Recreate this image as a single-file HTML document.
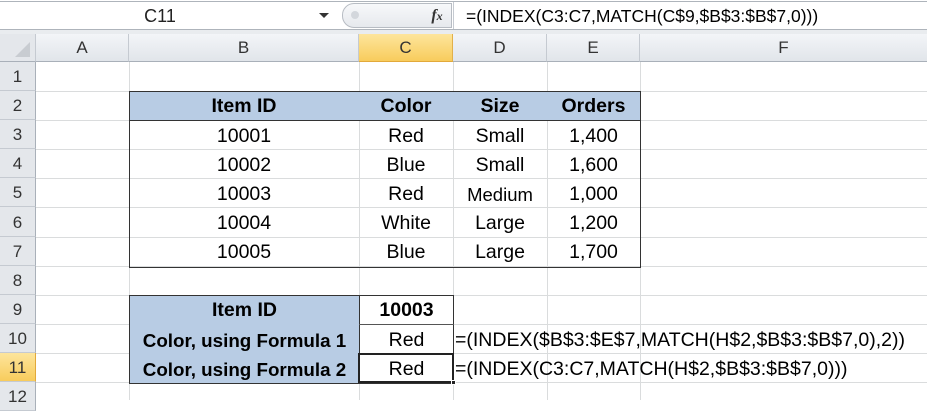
<!DOCTYPE html>
<html><head><meta charset="utf-8"><style>
*{margin:0;padding:0;box-sizing:border-box}
body{width:927px;height:400px;overflow:hidden;background:#fff;font-family:"Liberation Sans",sans-serif;position:relative}
.a{position:absolute}
.t{position:absolute;display:flex;align-items:center;justify-content:center;white-space:nowrap;color:#000;padding-top:2px}
.hl{position:absolute;left:36px;width:891px;height:1px;background:#dadcdd}
.vl{position:absolute;top:62px;height:338px;width:1px;background:#dadcdd}
.ch{position:absolute;top:34px;height:28px;background:linear-gradient(#f3f5f8,#e1e5ea);border-right:1px solid #c5cad1;border-bottom:1px solid #a9b0b9;display:flex;align-items:center;justify-content:center;font-size:17px;color:#333}
.rh{position:absolute;left:0;width:36px;background:#e4e7eb;border-bottom:1px solid #c5cad1;border-right:1px solid #a9b0b9;display:flex;align-items:center;justify-content:center;font-size:17px;color:#333;padding-top:2px}
.c{font-size:19.5px}
</style></head><body>
<div class="a" style="left:0;top:0;width:927px;height:33px;background:#fff"></div>
<div class="a" style="left:0;top:1px;width:927px;height:1px;background:#aeb4bb"></div>
<div class="a" style="left:0;top:29px;width:927px;height:1px;background:#aeb4bb"></div>
<div class="a" style="left:0;top:30px;width:927px;height:4px;background:#e9ecef"></div>
<div class="t" style="left:135px;top:3px;width:50px;height:24px;font-size:18px;color:#222">C11</div>
<div class="a" style="left:319px;top:13px;width:0;height:0;border-left:5px solid transparent;border-right:5px solid transparent;border-top:5px solid #333"></div>
<div class="a" style="left:342px;top:3px;width:110px;height:25px;border:1px solid #b7bcc3;border-radius:12px 0 0 12px;background:linear-gradient(#f7f8fa,#e6e9ed)"></div>
<div class="a" style="left:351px;top:11px;width:8px;height:8px;border-radius:50%;background:#d3d7dc"></div>
<div class="t" style="left:426px;top:4px;width:22px;height:22px;font-family:'Liberation Serif',serif;font-style:italic;font-weight:bold;font-size:16px;color:#333">f<span style="font-size:12px">x</span></div>
<div class="a" style="left:453px;top:2px;width:1px;height:27px;background:#c5cad1"></div>
<div class="t" style="left:466px;top:3px;height:24px;font-size:17.5px;justify-content:flex-start">=(INDEX(C3:C7,MATCH(C$9,$B$3:$B$7,0)))</div>

<div class="ch" style="left:0;width:36px;background:#e4e7eb"><div style="position:absolute;right:5px;bottom:4px;width:0;height:0;border-left:15px solid transparent;border-bottom:15px solid #c8ccd1"></div></div>
<div class="ch" style="left:36px;width:93px">A</div>
<div class="ch" style="left:129px;width:230px">B</div>
<div class="ch" style="left:359px;width:94px;background:linear-gradient(#fde59c,#f8cc5c);border-color:#e2b04a;border-bottom:1px solid #e2a93a">C</div>
<div class="ch" style="left:453px;width:94px">D</div>
<div class="ch" style="left:547px;width:93px">E</div>
<div class="ch" style="left:640px;width:287px;border-right:none">F</div>

<div class="hl" style="top:91px"></div><div class="hl" style="top:120px"></div><div class="hl" style="top:149px"></div>
<div class="hl" style="top:178px"></div><div class="hl" style="top:207px"></div><div class="hl" style="top:237px"></div>
<div class="hl" style="top:266px"></div><div class="hl" style="top:295px"></div><div class="hl" style="top:324px"></div>
<div class="hl" style="top:353px"></div><div class="hl" style="top:382px"></div>
<div class="vl" style="left:129px"></div><div class="vl" style="left:359px"></div><div class="vl" style="left:453px"></div>
<div class="vl" style="left:547px"></div><div class="vl" style="left:640px"></div>

<div class="rh" style="top:62px;height:29px">1</div>
<div class="rh" style="top:91px;height:29px">2</div>
<div class="rh" style="top:120px;height:29px">3</div>
<div class="rh" style="top:149px;height:29px">4</div>
<div class="rh" style="top:178px;height:29px">5</div>
<div class="rh" style="top:207px;height:30px">6</div>
<div class="rh" style="top:237px;height:29px">7</div>
<div class="rh" style="top:266px;height:29px">8</div>
<div class="rh" style="top:295px;height:29px">9</div>
<div class="rh" style="top:324px;height:29px">10</div>
<div class="rh" style="top:353px;height:29px;background:linear-gradient(#fde59c,#f8cc5c);border-right-color:#e2a93a">11</div>
<div class="rh" style="top:382px;height:29px">12</div>

<div class="a" style="left:129px;top:91px;width:512px;height:29px;background:#b8cce4"></div>
<div class="a" style="left:129px;top:120px;width:512px;height:1px;background:#333"></div>
<div class="a" style="left:129px;top:91px;width:512px;height:177px;border:1.5px solid #333"></div>
<div class="t c" style="left:129px;top:91px;width:230px;height:29px;font-weight:bold">Item ID</div>
<div class="t c" style="left:359px;top:91px;width:94px;height:29px;font-weight:bold">Color</div>
<div class="t c" style="left:453px;top:91px;width:94px;height:29px;font-weight:bold">Size</div>
<div class="t c" style="left:547px;top:91px;width:93px;height:29px;font-weight:bold">Orders</div>

<div class="t c" style="left:129px;top:121px;width:230px;height:29px">10001</div>
<div class="t c" style="left:359px;top:121px;width:94px;height:29px">Red</div>
<div class="t c" style="left:453px;top:121px;width:94px;height:29px">Small</div>
<div class="t c" style="left:547px;top:121px;width:93px;height:29px">1,400</div>

<div class="t c" style="left:129px;top:150px;width:230px;height:29px">10002</div>
<div class="t c" style="left:359px;top:150px;width:94px;height:29px">Blue</div>
<div class="t c" style="left:453px;top:150px;width:94px;height:29px">Small</div>
<div class="t c" style="left:547px;top:150px;width:93px;height:29px">1,600</div>

<div class="t c" style="left:129px;top:179px;width:230px;height:29px">10003</div>
<div class="t c" style="left:359px;top:179px;width:94px;height:29px">Red</div>
<div class="t" style="left:453px;top:179px;width:94px;height:29px;font-size:18.5px">Medium</div>
<div class="t c" style="left:547px;top:179px;width:93px;height:29px">1,000</div>

<div class="t c" style="left:129px;top:208px;width:230px;height:29px">10004</div>
<div class="t c" style="left:359px;top:208px;width:94px;height:29px">White</div>
<div class="t c" style="left:453px;top:208px;width:94px;height:29px">Large</div>
<div class="t c" style="left:547px;top:208px;width:93px;height:29px">1,200</div>

<div class="t c" style="left:129px;top:237px;width:230px;height:29px">10005</div>
<div class="t c" style="left:359px;top:237px;width:94px;height:29px">Blue</div>
<div class="t c" style="left:453px;top:237px;width:94px;height:29px">Large</div>
<div class="t c" style="left:547px;top:237px;width:93px;height:29px">1,700</div>

<div class="a" style="left:129px;top:295px;width:231px;height:89px;background:#b8cce4;border:1.5px solid #333"></div>
<div class="a" style="left:359px;top:295px;width:95px;height:89px;background:#fff;border:1.5px solid #333"></div>
<div class="a" style="left:359px;top:324px;width:95px;height:1px;background:#555"></div>
<div class="t c" style="left:129px;top:295px;width:231px;height:29px;font-weight:bold">Item ID</div>
<div class="t" style="left:129px;top:325px;width:231px;height:29px;font-size:18.8px;font-weight:bold">Color, using Formula 1</div>
<div class="t" style="left:129px;top:354px;width:231px;height:29px;font-size:18.8px;font-weight:bold">Color, using Formula 2</div>
<div class="t c" style="left:359px;top:295px;width:95px;height:29px;font-weight:bold">10003</div>
<div class="t c" style="left:359px;top:325px;width:95px;height:29px">Red</div>
<div class="a" style="left:358px;top:353px;width:96px;height:30px;border:2px solid #222"></div>
<div class="a" style="left:451px;top:380px;width:5px;height:5px;background:#222;border:1px solid #fff"></div>
<div class="t c" style="left:359px;top:354px;width:95px;height:29px">Red</div>
<div class="t" style="left:455px;top:325px;height:29px;font-size:19.5px;justify-content:flex-start">=(INDEX($B$3:$E$7,MATCH(H$2,$B$3:$B$7,0),2))</div>
<div class="t" style="left:455px;top:354px;height:29px;font-size:19.5px;justify-content:flex-start">=(INDEX(C3:C7,MATCH(H$2,$B$3:$B$7,0)))</div>
</body></html>
